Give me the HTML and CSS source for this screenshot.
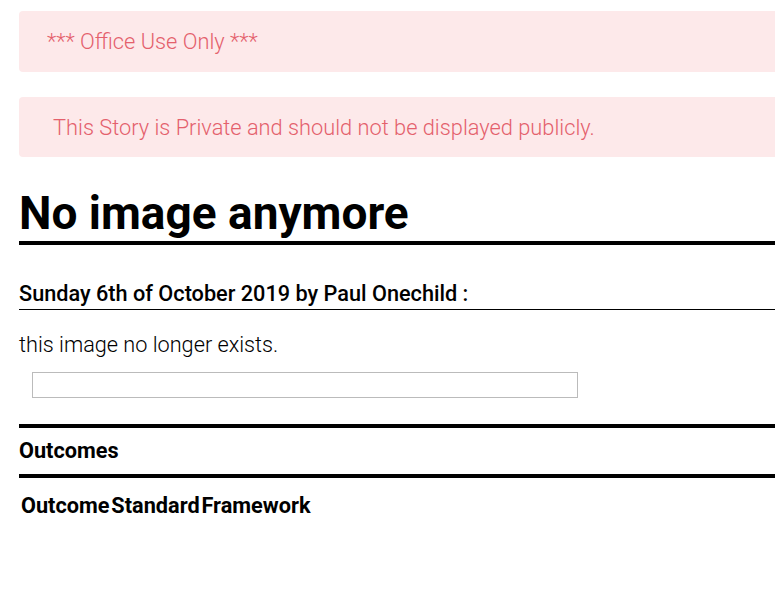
FILE: index.html
```html
<!DOCTYPE html>
<html lang="en">
<head>
    <meta charset="UTF-8">
    <title>No image anymore</title>
    <link rel="stylesheet" href="styles.css">
</head>
<body>
    <div class="page">
        <div class="alert">*** Office Use Only ***</div>
        <div class="alert alert-private">This Story is Private and should not be displayed publicly.</div>

        <h1 class="story-title">No image anymore</h1>
        <h4 class="story-meta">Sunday 6th of October 2019 by Paul Onechild :</h4>

        <p class="story-body">this image no longer exists.</p>
        <div class="image-frame"></div>

        <h3 class="section-title">Outcomes</h3>
        <h3 class="section-title framework">Outcome Standard Framework</h3>
    </div>
</body>
</html>
```

FILE: styles.css
```css
html, body {
    margin: 0;
    overflow: hidden;
}
body {
    font-family: Roboto, "Liberation Sans", sans-serif;
    color: #000;
    background: #fff;
}
.page {
    width: 800px;
    padding: 11px 0 40px 19px;
}
.alert {
    background: #fde9ea;
    color: #e4606c;
    border-radius: 4px;
    padding: 0 28px;
    height: 61px;
    line-height: 61px;
    font-size: 21.8px;
    font-weight: 300;
    margin-bottom: 25px;
}
.alert-private {
    padding-left: 34px;
    height: 60px;
    line-height: 61px;
    margin-bottom: 0;
}
.story-title {
    font-size: 46px;
    font-weight: 700;
    line-height: 50px;
    margin: 31px 0 0;
    padding-bottom: 3px;
    border-bottom: 4px solid #000;
}
.story-meta {
    font-size: 21.7px;
    font-weight: 500;
    line-height: 26px;
    margin: 36px 0 0;
    padding-bottom: 2px;
    border-bottom: 1px solid #000;
}
.story-body {
    font-size: 21.7px;
    font-weight: 300;
    line-height: 26px;
    margin: 22px 0 0;
}
.image-frame {
    width: 544px;
    height: 24px;
    margin: 14px 0 0 13px;
    border: 1px solid #bbb;
}
.section-title {
    font-size: 21.7px;
    font-weight: 700;
    line-height: 26px;
    margin: 26px 0 0;
    padding-top: 10px;
    border-top: 4px solid #000;
}
.framework {
    margin-top: 10px;
    padding-top: 15px;
    padding-left: 2px;
    word-spacing: -3.5px;
}
```
